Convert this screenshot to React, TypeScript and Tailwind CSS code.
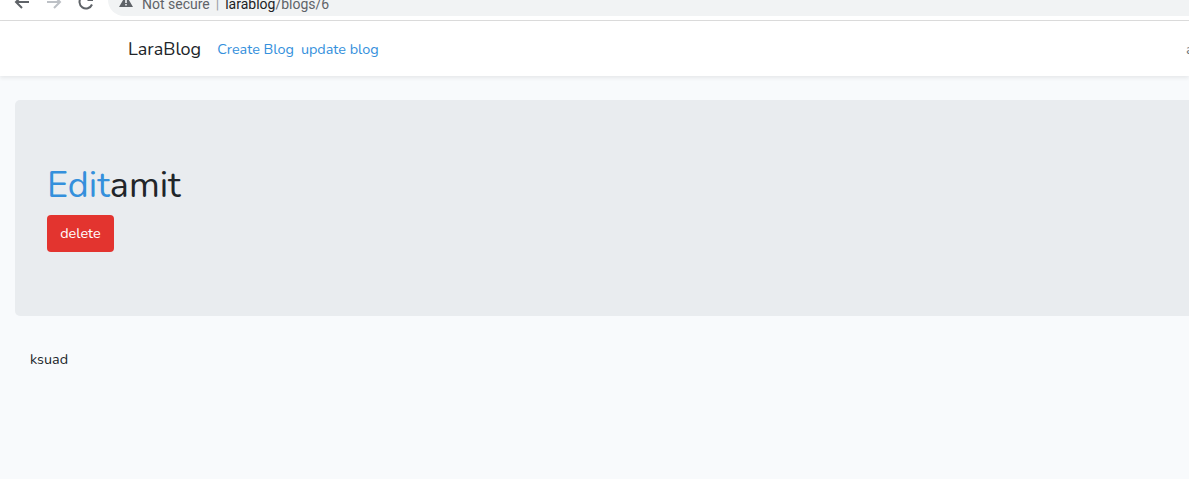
const App = () => {
  return (
    <div className="h-[479px] w-[1189px] overflow-hidden bg-[#f8fafc] font-['Nunito','Lato','Noto_Sans',sans-serif] text-[14.4px] text-[#212529]">
      <div className="flex h-[21px] items-start overflow-hidden border-b border-[#dcdcdc] bg-white">
        <div className="flex h-[17px] items-end">
          <svg width="16" height="16" viewBox="0 0 16 16" className="mb-[7px] ml-[14px] shrink-0" fill="none" stroke="#5f6368" strokeWidth="2">
            <path d="M15 8H2M8 2 2 8l6 6" />
          </svg>
          <svg width="16" height="16" viewBox="0 0 16 16" className="mb-[7px] ml-[16px] shrink-0" fill="none" stroke="#bdc1c6" strokeWidth="2">
            <path d="M1 8h13M8 2l6 6-6 6" />
          </svg>
          <svg width="16" height="16" viewBox="0 0 16 16" className="mb-[7px] ml-[16px] shrink-0" fill="none" stroke="#5f6368" strokeWidth="2">
            <path d="M14 10.5A6.5 6.5 0 1 1 13.5 4.5" />
            <path d="M15 1v6H9Z" fill="#5f6368" stroke="none" />
          </svg>
        </div>
        <div className="ml-[14px] flex h-[16px] flex-1 items-end rounded-bl-[16px] bg-[#f1f3f4] pl-[11px] font-['Roboto',sans-serif] text-[14px] leading-[20px]">
          <svg width="14" height="13" viewBox="0 0 14 13" className="mb-[8px] shrink-0" fill="#5f6368">
            <path d="M7 0 14 12H0ZM6.2 4v4h1.6V4Zm0 5v1.6h1.6V9Z" fillRule="evenodd" />
          </svg>
          <span className="mb-[2px] ml-[9px] text-[#5f6368]">Not secure</span>
          <span className="mb-[2px] ml-[6px] text-[#9aa0a6]">|</span>
          <span className="mb-[2px] ml-[6px] text-[#202124]">larablog</span>
          <span className="mb-[2px] text-[#5f6368]">/blogs/6</span>
        </div>
      </div>
      <nav className="flex h-[55px] items-center justify-between bg-white pl-[128px] pt-[2px] shadow-[0_2px_4px_rgba(0,0,0,0.075)]">
        <div className="flex items-center">
          <a className="text-[18px] text-[#212529]">LaraBlog</a>
          <a className="ml-[16px] text-[#3490dc]">Create Blog</a>
          <a className="ml-[7px] text-[#3490dc]">update blog</a>
        </div>
        <span className="-mr-[5px] w-[8px] text-[#6c757d]">a</span>
      </nav>
      <main className="pl-[15px] pt-[24px]">
        <div className="h-[216px] w-[1300px] rounded-[5px] bg-[#e9ecef] pl-[32px] pt-[64px]">
          <h1 className="text-[36px] leading-[43px]">
            <a className="text-[#3490dc]">Edit</a>
            amit
          </h1>
          <button className="mt-[8px] block h-[37px] w-[67px] rounded-[4px] bg-[#e3342f] text-white">delete</button>
        </div>
        <p className="pl-[15px] pt-[33px] leading-[21px]">ksuad</p>
      </main>
    </div>
  );
};

export default App;
